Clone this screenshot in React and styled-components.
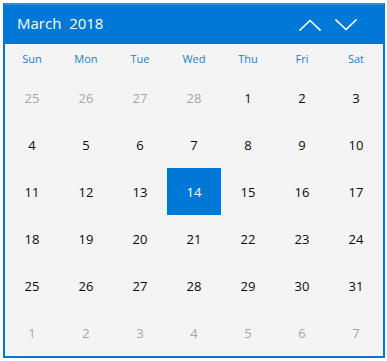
import React from "react";
import styled, { createGlobalStyle } from "styled-components";

const Global = createGlobalStyle`
  html, body { margin: 0; padding: 0; background: #ffffff; }
  body { font-family: "Open Sans", "Noto Sans", sans-serif; }
`;

const Page = styled.div`
  padding: 3px 0 0 3px;
`;

const Frame = styled.div`
  width: 378px;
  border: 2px solid #0078d7;
  border-top: 2px solid #2a8ee0;
  background: #f4f4f4;
`;

const Header = styled.div`
  height: 39px;
  background: #0078d7;
  display: flex;
  align-items: center;
  padding: 0 26px 0 12px;
  color: #ffffff;
`;

const Title = styled.div`
  flex: 1;
  font-size: 15px;
  white-space: pre;
  line-height: 1;
  padding-bottom: 2px;
`;

const NavButton = styled.button`
  background: none;
  border: 0;
  padding: 0;
  margin-left: ${(p) => p.$gap || 0}px;
  width: 22px;
  height: 12px;
  display: flex;
  align-items: center;
  justify-content: center;
  cursor: pointer;
`;

const Grid = styled.div`
  display: grid;
  grid-template-columns: repeat(7, 54px);
`;

const WeekDay = styled.div`
  height: 30px;
  display: flex;
  align-items: center;
  justify-content: center;
  font-size: 11px;
  color: #1a7fd4;
  padding-bottom: 1px;
  box-sizing: border-box;
`;

const Day = styled.div`
  height: 47px;
  display: flex;
  align-items: center;
  justify-content: center;
  font-size: 13px;
  color: ${(p) => (p.$selected ? "#ffffff" : p.$muted ? "#a6a6a6" : "#0a0a0a")};
  background: ${(p) => (p.$selected ? "#0078d7" : "transparent")};
`;

const Chevron = ({ up }) => (
  <svg width="22" height="12" viewBox="0 0 22 12" fill="none">
    <path
      d={up ? "M1 11 L11 1.5 L21 11" : "M1 1 L11 10.5 L21 1"}
      stroke="#ffffff"
      strokeWidth="1.6"
      strokeLinecap="square"
    />
  </svg>
);

const weekDays = ["Sun", "Mon", "Tue", "Wed", "Thu", "Fri", "Sat"];

const days = [];
[25, 26, 27, 28].forEach((d) => days.push({ d, muted: true }));
for (let i = 1; i <= 31; i++) days.push({ d: i, selected: i === 14 });
for (let i = 1; i <= 7; i++) days.push({ d: i, muted: true });

export default function App() {
  return (
    <>
      <Global />
      <Page>
        <Frame>
          <Header>
            <Title>{"March  2018"}</Title>
            <NavButton aria-label="Previous">
              <Chevron up />
            </NavButton>
            <NavButton $gap={14} aria-label="Next">
              <Chevron />
            </NavButton>
          </Header>
          <Grid>
            {weekDays.map((w) => (
              <WeekDay key={w}>{w}</WeekDay>
            ))}
            {days.map((x, i) => (
              <Day key={i} $muted={x.muted} $selected={x.selected}>
                {x.d}
              </Day>
            ))}
          </Grid>
        </Frame>
      </Page>
    </>
  );
}
